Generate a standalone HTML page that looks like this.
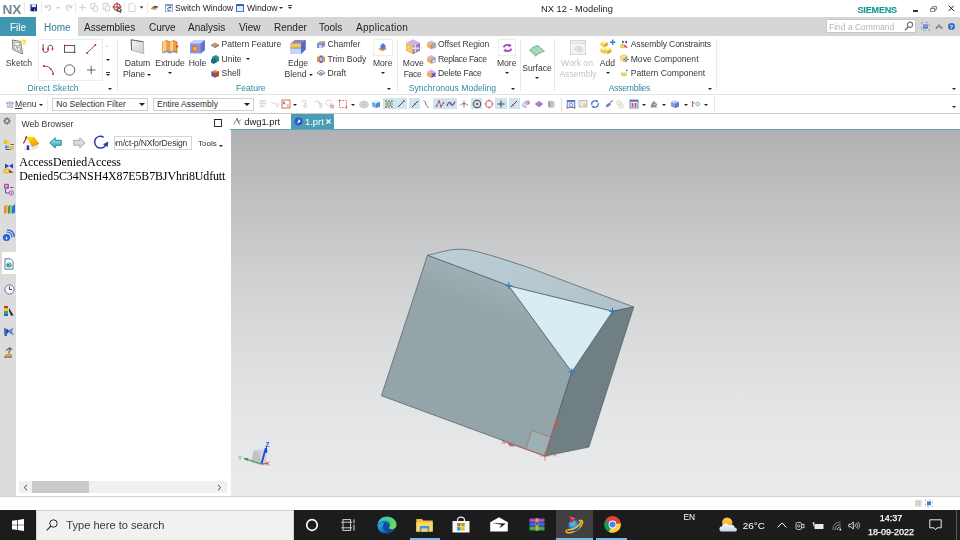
<!DOCTYPE html>
<html>
<head>
<meta charset="utf-8">
<title>NX 12 - Modeling</title>
<style>
*{box-sizing:border-box;margin:0;padding:0}
html,body{width:960px;height:540px;overflow:hidden;background:#fff}
div,svg{will-change:opacity}
body{position:relative;font-family:"Liberation Sans",sans-serif;font-size:8.4px;color:#222}
.a{position:absolute;white-space:nowrap}
.t{position:absolute;white-space:nowrap;line-height:10px;font-size:8.6px;color:#383838}
.tc{text-align:center}
.teal{color:#2f8aa5}
.dis{color:#c2c2c2}
#titlebar{left:0;top:-0.7px;width:960px;height:17.7px;background:transparent}
#tabbar{left:0;top:17px;width:960px;height:19px;background:#d6d6d6}
#ribbon{left:0;top:36px;width:960px;height:59px;background:#fff;border-bottom:1px solid #e4e4e4}
#selbar{left:0;top:95px;width:960px;height:19px;background:#fff;border-bottom:1px solid #c9c9c9}
.tab{position:absolute;top:0;height:19px;line-height:21px;font-size:10px;color:#222;white-space:nowrap}
.vsep{position:absolute;width:1px;background:#e9e9e9}
.dd{position:absolute;border-left:2px solid transparent;border-right:2px solid transparent;border-top:2.5px solid #222;width:0;height:0}
.combo{position:absolute;top:2.8px;height:13.2px;border:1px solid #cfcfcf;background:#fff;font-size:8.5px;line-height:11.4px;padding-left:3px;color:#2e2e2e}
#resbar{left:0;top:114px;width:16px;height:382px;background:#dcdcdc}
#webpanel{left:16px;top:114px;width:214px;height:382px;background:#fff}
#viewtabs{left:230px;top:114px;width:730px;height:15.6px;background:#fff;border-bottom:1.6px solid #62a6ba}
#viewport{left:230.5px;top:129.6px;width:729.5px;height:366.4px;background:linear-gradient(#b0b1b2 0%,#c4c5c6 25%,#d6d7d8 50%,#e3e4e5 75%,#eaebec 100%)}
#status{left:0;top:496px;width:960px;height:14px;background:#fff;border-top:1px solid #d0d0d0}
#selbar svg{opacity:0.82}
#taskbar{left:0;top:510px;width:960px;height:30px;background:#1c1c1c}
</style>
</head>
<body>
<div id="titlebar" class="a">
<div class="a" style="left:2.5px;top:1.2px;font-size:13.6px;line-height:17px;font-weight:bold;color:#6e8898;letter-spacing:-0.1px">NX</div>
<div class="vsep" style="left:24px;top:3px;height:11px"></div>
<svg class="a" style="left:29.7px;top:4.8px" width="7.6" height="7.6" viewBox="0 0 9 9"><rect x="0.5" y="0.5" width="8" height="8" fill="#1c2a8c"/><rect x="2" y="0.5" width="5" height="3.2" fill="#e8ecff"/><rect x="2.5" y="5.5" width="4" height="3" fill="#0d1560"/><rect x="5" y="6" width="1" height="2" fill="#dfe4ff"/></svg>
<div class="vsep" style="left:41px;top:3px;height:11px"></div>
<svg class="a" style="left:44px;top:4px" width="30" height="9" viewBox="0 0 30 9" fill="none" stroke="#cfcfcf" stroke-width="1.2"><path d="M1.5 4.5 C3 1.5 7 1.5 6.5 5 C6.3 6.5 5 7.5 4 7.5"/><path d="M1 2 L1.5 5 L4.3 4.3" stroke-width="1"/><path d="M12.2 4 L15.8 4 L14 6 Z" fill="#c4c4c4" stroke="none"/><path d="M27.5 4.5 C26 1.5 22 1.5 22.5 5 C22.7 6.5 24 7.5 25 7.5"/><path d="M28 2 L27.5 5 L24.7 4.3" stroke-width="1"/></svg>
<div class="vsep" style="left:75px;top:3px;height:11px"></div>
<svg class="a" style="left:78px;top:3px" width="46" height="11" viewBox="0 0 46 11" fill="none" stroke="#d2d2d2" stroke-width="1"><path d="M4.5 2.2 V8.8 M1.4 5.5 H7.8"/><rect x="13" y="1.5" width="4" height="5"/><rect x="15.5" y="4" width="4" height="5" fill="#fff"/><rect x="25" y="1.5" width="5" height="6"/><rect x="27.5" y="4" width="4" height="5" fill="#fff"/><circle cx="39" cy="5" r="3.2" stroke="#c62828" stroke-width="1.1"/><path d="M39 0.5 V9.5 M34.5 5 H43.5" stroke="#8e1b1b" stroke-width="0.8"/><path d="M40 5.5 L40 10 L41.3 8.8 L42.2 10.6 L43 10.2 L42.2 8.5 L43.8 8.3 Z" fill="#fff" stroke="#111" stroke-width="0.7"/></svg>
<div class="vsep" style="left:124px;top:3px;height:11px"></div>
<svg class="a" style="left:127px;top:3px" width="20" height="11" viewBox="0 0 20 11" fill="none" stroke="#d4d4d4" stroke-width="1"><path d="M2 1.5 H6 L8 3.5 V9.5 H2 Z"/><path d="M12.6 4.5 L16.4 4.5 L14.5 6.6 Z" fill="#222" stroke="none"/></svg>
<div class="vsep" style="left:147px;top:3px;height:11px"></div>
<svg class="a" style="left:150px;top:5px" width="8.6" height="7.4" viewBox="0 0 10 9"><path d="M0.5 5.5 L4 3.5 L9 5 L5.5 7.5 Z" fill="#e59b2b"/><path d="M4.5 2 L9.5 2.8 L8.5 5 L4.2 4 Z" fill="#32409a"/><path d="M0.5 5.5 L4 3.5 L4.5 5 Z" fill="#7c5a1a"/></svg>
<svg class="a" style="left:164.5px;top:4.6px" width="8" height="8.4" viewBox="0 0 8 8.4" fill="none"><rect x="0.5" y="0.5" width="7" height="7.4" fill="#f4f6fb" stroke="#8494b8" stroke-width="0.8"/><rect x="0.5" y="0.5" width="7" height="1.4" fill="#8494b8"/><path d="M5.8 3.4 C4 2.8 2.6 3.8 2.8 5.4 C3 6.6 4.4 7 5.4 6.4" stroke="#2a4ac8" stroke-width="1"/><path d="M4.6 2.2 L6.6 3.4 L4.8 4.8 Z" fill="#2a4ac8"/></svg>
<div class="t" style="left:175px;top:3.5px;font-size:8.6px;color:#222">Switch Window</div>
<svg class="a" style="left:236px;top:4.7px" width="8" height="8.2" viewBox="0 0 8 8.2" fill="none"><rect x="0.5" y="0.5" width="7" height="7.2" fill="#e4ecfc" stroke="#3658c8" stroke-width="0.9"/><rect x="0.5" y="0.5" width="7" height="1.5" fill="#3658c8"/></svg>
<div class="t" style="left:247px;top:3.5px;font-size:8.6px;color:#222">Window</div>
<div class="dd" style="left:279px;top:8px"></div>
<div class="a" style="left:287.8px;top:5.8px;width:4.4px;height:1px;background:#333"></div>
<div class="dd" style="left:288px;top:8px"></div>
<div class="t" style="left:541px;top:4.6px;font-size:9.3px;color:#222">NX 12 - Modeling</div>
<div class="a" style="left:857.5px;top:1.2px;font-size:9px;line-height:18px;font-weight:bold;color:#0f9a96;-webkit-text-stroke:0.12px #0f9a96;letter-spacing:-0.15px">SIEMENS</div>
<div class="a" style="left:913px;top:11px;width:5px;height:1.2px;background:#333"></div>
<svg class="a" style="left:929.5px;top:6.3px" width="7.2" height="6.4" viewBox="0 0 9 8" fill="none" stroke="#555" stroke-width="1"><path d="M0.8 3 H6 V7.2 H0.8 Z"/><path d="M2.5 3 L3 0.8 H8.2 L7.6 5 H6"/></svg>
<svg class="a" style="left:947.5px;top:5.7px" width="6.6" height="6.6" viewBox="0 0 8 8" fill="none" stroke="#222" stroke-width="1.2"><path d="M0.8 0.8 L7.2 7.2 M7.2 0.8 L0.8 7.2"/></svg>
</div>
<div id="tabbar" class="a">
<div class="a" style="left:0;top:0;width:35.5px;height:19px;background:#4297b0"></div>
<div class="tab" style="left:10px;color:#fff">File</div>
<div class="a" style="left:36px;top:0;width:42px;height:19px;background:#fff"></div>
<div class="tab" style="left:44px;color:#2d7d96">Home</div>
<div class="tab" style="left:84px">Assemblies</div>
<div class="tab" style="left:149px">Curve</div>
<div class="tab" style="left:188px">Analysis</div>
<div class="tab" style="left:239px">View</div>
<div class="tab" style="left:274px">Render</div>
<div class="tab" style="left:319px">Tools</div>
<div class="tab" style="left:356px;letter-spacing:0.3px">Application</div>
<div class="a" style="left:826px;top:2px;width:90px;height:14px;background:#fff;border:1px solid #c8c8c8"></div>
<div class="t" style="left:829px;top:4.5px;font-size:8.5px;color:#b5b5b5">Find a Command</div>
<svg class="a" style="left:904px;top:4px" width="10" height="10" viewBox="0 0 10 10" fill="none" stroke="#777" stroke-width="1.2"><circle cx="6" cy="3.8" r="2.6"/><path d="M4 6 L1 9.2" stroke-width="1.6"/></svg>
<svg class="a" style="left:921px;top:5px" width="9" height="9" viewBox="0 0 9 9" fill="none"><rect x="0.6" y="0.6" width="7.8" height="7.8" stroke="#8a8f99" stroke-width="0.8" stroke-dasharray="2.5 2.6" stroke-dashoffset="1.2"/><rect x="2.2" y="2.5" width="4.6" height="4" fill="#3b62c4"/><rect x="2.8" y="3.6" width="3.4" height="1" fill="#cfe0ff"/></svg>
<svg class="a" style="left:934.5px;top:6.3px" width="8" height="6.2" viewBox="0 0 9 7" fill="none" stroke="#4a4a4a" stroke-width="0.8"><path d="M0.8 5.8 L4.5 1.8 L8.2 5.8 L6.6 5.8 L4.5 3.6 L2.4 5.8 Z"/></svg>
<svg class="a" style="left:948.3px;top:6.3px" width="7" height="7" viewBox="0 0 8 8"><circle cx="4" cy="4" r="3.7" fill="#2f6fd6"/><circle cx="4" cy="4" r="3.7" fill="none" stroke="#1b4aa3" stroke-width="0.5"/><text x="4" y="6.4" font-size="6.2" font-weight="bold" fill="#fff" text-anchor="middle" font-family="Liberation Sans, sans-serif">?</text></svg>
</div>
<div id="ribbon" class="a">
<svg class="a" style="left:11px;top:2px" width="17" height="17" viewBox="0 0 17 17"><path d="M1.5 2 L9.5 3.5 L11.5 16 L1.8 11.5 Z" fill="#eceeec" stroke="#7a7e7a" stroke-width="1"/><path d="M3 4 L8.3 5 L8.8 8 L3.2 6.8 Z" fill="#fff" stroke="#8a8e8a" stroke-width="0.7"/><ellipse cx="4.3" cy="9.2" rx="1.3" ry="1.5" fill="#fff" stroke="#8a8e8a" stroke-width="0.7"/><path d="M6.5 9.3 L9.3 10.2 L9.8 13.3 L6.7 12 Z" fill="#fff" stroke="#8a8e8a" stroke-width="0.7"/><path d="M12 0.2 L12.9 2.6 L15.8 1.5 L14 3.9 L16.6 5.2 L13.6 5.3 L13.2 8 L11.8 5.6 L9.2 6.6 L10.6 4.2 L8.6 2.6 L11.3 2.8 Z" fill="#f1e11a"/><circle cx="12.2" cy="4.1" r="1.2" fill="#fffbd0"/></svg>
<div class="t tc " style="left:-21px;width:80px;top:21.5px;">Sketch</div>
<div class="a" style="left:37.5px;top:3px;width:65px;height:42px;border:1px solid #ececec"></div>
<svg class="a" style="left:41px;top:5px" width="58" height="38" viewBox="0 0 58 38" fill="none">
<path d="M2.1 3.1 V9.4 C2.1 12 7.1 12 7.1 9.4 V6.2 C7.1 3.6 11.5 3.6 11.5 6.2 V9.2" stroke="#3a3030" stroke-width="0.9"/><circle cx="2.1" cy="8.2" r="0.95" fill="#d02222"/><circle cx="7.1" cy="8.2" r="0.95" fill="#d02222"/><circle cx="11.5" cy="8.2" r="0.95" fill="#d02222"/>
<rect x="23.5" y="4.5" width="10.2" height="6.8" stroke="#4a4444" stroke-width="0.9"/><circle cx="23.7" cy="4.5" r="0.9" fill="#d02222"/><circle cx="33.5" cy="11.3" r="0.9" fill="#d02222"/>
<path d="M46.1 11.9 L54.3 4" stroke="#5a3434" stroke-width="0.8"/><circle cx="46.1" cy="11.9" r="1" fill="#d02222"/><circle cx="54.3" cy="4" r="1" fill="#d02222"/>
<path d="M2.8 25 C7.5 25 11.5 28 12.1 33.1" stroke="#6a2a2a" stroke-width="0.9"/><circle cx="2.8" cy="25" r="1" fill="#d02222"/><circle cx="12.1" cy="33.1" r="1" fill="#d02222"/><circle cx="9.6" cy="27.8" r="0.85" fill="#d02222"/>
<circle cx="28.6" cy="29" r="5.2" stroke="#444" stroke-width="0.85"/>
<path d="M50.2 24.8 V33.2 M46 29 H54.4" stroke="#444" stroke-width="0.85"/>
</svg>
<div class="dd" style="left:106.3px;top:8.5px;border-top:none;border-bottom:2.2px solid #c4c4c4;border-left-width:1.8px;border-right-width:1.8px"></div>
<div class="dd" style="left:106px;top:23.0px;border-top-color:#222"></div>
<div class="a" style="left:106px;top:36px;width:4px;height:1px;background:#333"></div>
<div class="dd" style="left:106px;top:38.0px;border-top-color:#222"></div>
<div class="t teal" style="left:27.5px;top:47.0px;">Direct Sketch</div>
<div class="dd" style="left:108px;top:51.5px;border-top-color:#222"></div>
<div class="vsep" style="left:117px;top:3px;height:52px"></div>
<svg class="a" style="left:130px;top:3px" width="16" height="16" viewBox="0 0 16 16"><defs><linearGradient id="dp" x1="0" y1="0" x2="1" y2="1"><stop offset="0" stop-color="#f3f5f2"/><stop offset="1" stop-color="#c9d2c9"/></linearGradient></defs><path d="M1.2 0.8 L13.4 2.8 L13.8 14.6 L1.6 11.2 Z" fill="url(#dp)" stroke="#9aa09a" stroke-width="0.7"/><path d="M1.6 11.2 L1.2 0.8 L13.4 2.8" fill="none" stroke="#5a5f5a" stroke-width="0.9"/></svg>
<div class="t tc " style="left:97.5px;width:80px;top:21.5px;">Datum</div>
<div class="t " style="left:123px;top:33.0px;">Plane</div>
<div class="dd" style="left:147px;top:37.5px;border-top-color:#222"></div>
<svg class="a" style="left:161px;top:3px" width="18" height="16" viewBox="0 0 18 16"><path d="M1.5 3 L5.5 1.5 L9 3 L12.5 1.5 L16 3 V14 L12.5 12.5 L9 14 L5.5 12.5 L1.5 14 Z" fill="#f4a13c" stroke="#b6651a" stroke-width="0.7"/><path d="M5.5 1.5 V12.5 M9 3 V14 M12.5 1.5 V12.5" stroke="#c8741e" stroke-width="0.7"/><path d="M1.5 3 L5.5 1.5 V12.5 L1.5 14 Z" fill="#fbd08e"/><path d="M9 3 L12.5 1.5 V12.5 L9 14 Z" fill="#fbd08e"/><path d="M2.5 12.4 L5.5 11.2 L9 12.6 L12.5 11.2 L15 12.2 V14 L12.5 13 L9 14.6 L5.5 13 L2.5 14.2 Z" fill="#7f8fd6" opacity="0.85"/><path d="M15.5 6 L17.5 7.5 L15.5 9 Z" fill="#d02222"/></svg>
<div class="t tc " style="left:130px;width:80px;top:21.5px;">Extrude</div>
<div class="dd" style="left:168px;top:35.5px;border-top-color:#222"></div>
<svg class="a" style="left:189px;top:3px" width="17" height="16" viewBox="0 0 17 16"><path d="M1 4.6 L5 1 H16 V11 L11.6 14.6 H1 Z" fill="#8698e6"/><path d="M1 4.6 L5 1 H16 L11.6 4.6 Z" fill="#c6d0f8"/><path d="M11.6 4.6 L16 1 V11 L11.6 14.6 Z" fill="#5f76cc"/><circle cx="6" cy="9.6" r="2.7" fill="#f8ae2c" stroke="#e0503a" stroke-width="0.8"/></svg>
<div class="t tc " style="left:157.5px;width:80px;top:21.5px;">Hole</div>
<svg class="a" style="left:210px;top:4px" width="10" height="38" viewBox="0 0 10 38"><path d="M1 4.5 L5 2.5 L9 4.5 L5 6.8 Z" fill="#e8913a"/><path d="M1 4.5 L5 6.8 V8 L1 5.6 Z" fill="#5a6fc0"/><path d="M9 4.5 L5 6.8 V8 L9 5.6 Z" fill="#3b4f9e"/>
<path d="M2 17 L6 15 L9 17 V21 L5 23 L2 21 Z" fill="#2f8f7a"/><path d="M1 19.5 L4 18 L6.5 19.5 V22.5 L3.5 24 L1 22.5 Z" fill="#1c6b8a"/>
<path d="M1.5 31.5 L5 30 L9 31.5 V36 L5 37.5 L1.5 36 Z" fill="#e58a2e"/><path d="M1.5 31.5 L5 33 V37.5 L1.5 36 Z" fill="#4a62c2"/><path d="M5 33 L9 31.5 V36 L5 37.5 Z" fill="#c2452e"/></svg>
<div class="t " style="left:221.5px;top:3.0px;">Pattern Feature</div>
<div class="t " style="left:221.5px;top:17.5px;">Unite</div>
<div class="dd" style="left:245.5px;top:22.0px;border-top-color:#222"></div>
<div class="t " style="left:221.5px;top:32.0px;">Shell</div>
<svg class="a" style="left:289px;top:3px" width="18" height="17" viewBox="0 0 18 17"><defs><linearGradient id="ebg" x1="0" y1="0" x2="0" y2="1"><stop offset="0" stop-color="#b9d88e"/><stop offset="0.6" stop-color="#f2c45a"/><stop offset="1" stop-color="#f08a3a"/></linearGradient></defs><path d="M1.6 4.6 L6 1 H16.6 V10.6 L12 15 H1.6 Z" fill="#7288e2"/><path d="M1.6 4.6 L6 1 H16.6 L12 4.6 Z" fill="#e8824a"/><path d="M3.8 3.6 L6.6 1.6 H15 L12 3.8 Z" fill="#6a86e8"/><path d="M12 4.6 L16.6 1 V10.6 L12 15 Z" fill="#5068d0"/><path d="M1.6 5.4 C1.6 4.8 2.2 4.4 2.8 4.4 H12 V9.4 H1.6 Z" fill="url(#ebg)"/><path d="M1.6 9.4 H12 V15 H1.6 Z" fill="#c6d4f6"/><path d="M1.6 9.4 H12" stroke="#8aa0dc" stroke-width="0.5"/></svg>
<div class="t tc " style="left:258px;width:80px;top:21.5px;">Edge</div>
<div class="t " style="left:284.5px;top:33.0px;">Blend</div>
<div class="dd" style="left:308.5px;top:37.5px;border-top-color:#222"></div>
<svg class="a" style="left:316px;top:4px" width="10" height="38" viewBox="0 0 10 38"><path d="M1 3.5 L4 1.5 H9 V6 L6 8 H1 Z" fill="#7c8fdb"/><path d="M1 3.5 L6 3.5 L9 1.5 L4 1.5Z" fill="#e5a04a"/><path d="M3 5 H6 V8 H3 Z" fill="#c7d2f5"/>
<rect x="1" y="16.5" width="8" height="5.5" fill="#e8943a"/><rect x="3.5" y="15.5" width="3" height="7.5" fill="#5369c7"/><rect x="4.3" y="17.5" width="1.4" height="3.5" fill="#dfe5fb"/>
<path d="M1 33 L5 30 L9 33 L5 35.5 Z" fill="none" stroke="#b55a8a" stroke-width="0.9"/><path d="M2.5 33.5 L5 31.8 L7.5 33.5 L5 35 Z" fill="#8a9bd8"/></svg>
<div class="t " style="left:327.5px;top:3.0px;">Chamfer</div>
<div class="t " style="left:327.5px;top:17.5px;">Trim Body</div>
<div class="t " style="left:327.5px;top:32.0px;">Draft</div>
<div class="a" style="left:373px;top:3px;width:19.5px;height:16.5px;border:1px solid #ededed"></div>
<svg class="a" style="left:377px;top:6px" width="11" height="10" viewBox="0 0 11 10"><path d="M1 7 L5.5 5 L10 7 L5.5 9.2 Z" fill="#e39a3a"/><path d="M3.5 3.5 L6 1 L8.5 3.5 V6.5 L6 7.6 L3.5 6.5 Z" fill="#5a74d4"/></svg>
<div class="t tc " style="left:342.7px;width:80px;top:21.5px;">More</div>
<div class="dd" style="left:380.5px;top:35.5px;border-top-color:#222"></div>
<div class="t teal" style="left:236px;top:47.0px;">Feature</div>
<div class="dd" style="left:387px;top:51.5px;border-top-color:#222"></div>
<div class="vsep" style="left:396.5px;top:3px;height:52px"></div>
<svg class="a" style="left:406px;top:3px" width="15" height="16" viewBox="0 0 15 16"><path d="M7 0.3 L14 3.8 L7 7.3 L0.2 3.8 Z" fill="#cfb0ea"/><path d="M0.2 3.8 L7 7.3 V15.3 L0.2 11.8 Z" fill="#f0ae3c"/><path d="M7 7.3 L14 3.8 V11.8 L7 15.3 Z" fill="#a274d2"/><path d="M1.2 5.2 L6 7.7 V13.6 L1.2 11.2 Z" fill="#f8cf6a"/><path d="M9.2 4.6 L11 6.6 H10 V8.2 H11.6 V7.2 L13.8 9.2 L11.6 11.2 V10.2 H10 V11.8 H11 L9.2 13.8 L7.4 11.8 H8.4 V10.2 H6.8 V11.2 L4.6 9.2 L6.8 7.2 V8.2 H8.4 V6.6 H7.4 Z" fill="#e6e6e8" stroke="#8c8c94" stroke-width="0.5"/></svg>
<div class="t tc " style="left:373.3px;width:80px;top:21.5px;">Move</div>
<div class="t tc " style="left:372.6px;width:80px;top:33.0px;letter-spacing:-0.3px">Face</div>
<svg class="a" style="left:427px;top:4px" width="10" height="38" viewBox="0 0 10 38"><g><path d="M4.2 0.6 L8.4 2.7 L4.2 4.8 L0.2 2.7 Z" fill="#cfb0ea"/><path d="M0.2 2.7 L4.2 4.8 V9.2 L0.2 7.1 Z" fill="#f0ae3c"/><path d="M4.2 4.8 L8.4 2.7 V7.1 L4.2 9.2 Z" fill="#a274d2"/></g><circle cx="6.8" cy="6" r="2" fill="#eee" stroke="#666" stroke-width="0.6"/><path d="M6.8 4.8 V7.2 M5.6 6 H8" stroke="#555" stroke-width="0.5"/>
<g transform="translate(0,14.5)"><path d="M4.2 0.6 L8.4 2.7 L4.2 4.8 L0.2 2.7 Z" fill="#cfb0ea"/><path d="M0.2 2.7 L4.2 4.8 V9.2 L0.2 7.1 Z" fill="#f0ae3c"/><path d="M4.2 4.8 L8.4 2.7 V7.1 L4.2 9.2 Z" fill="#a274d2"/></g><path d="M4.8 20.2 L8.6 18.6 L8.6 22 L5.4 23.2 Z" fill="#d8d8de" stroke="#888" stroke-width="0.4"/>
<g transform="translate(0,29)"><path d="M4.2 0.6 L8.4 2.7 L4.2 4.8 L0.2 2.7 Z" fill="#cfb0ea"/><path d="M0.2 2.7 L4.2 4.8 V9.2 L0.2 7.1 Z" fill="#f0ae3c"/><path d="M4.2 4.8 L8.4 2.7 V7.1 L4.2 9.2 Z" fill="#a274d2"/></g><path d="M5 33.4 L8.6 37 M8.6 33.4 L5 37" stroke="#5a3a8a" stroke-width="1"/></svg>
<div class="t " style="left:438px;top:3.0px;letter-spacing:-0.1px">Offset Region</div>
<div class="t " style="left:438px;top:17.5px;letter-spacing:-0.37px">Replace Face</div>
<div class="t " style="left:438px;top:32.0px;letter-spacing:-0.25px">Delete Face</div>
<div class="a" style="left:497.5px;top:3px;width:18.5px;height:16.5px;border:1px solid #ededed"></div>
<svg class="a" style="left:501.5px;top:6.5px" width="11" height="10" viewBox="0 0 11 10" fill="none" stroke="#a84cc8" stroke-width="1.9"><path d="M1.6 4.4 C2.4 1.8 6 1.2 7.8 2.8"/><path d="M9.4 5.6 C8.6 8.2 5 8.8 3.2 7.2"/><path d="M6.6 0.6 L9.8 2.4 L6.8 4.6 Z M4.4 9.4 L1.2 7.6 L4.2 5.4 Z" fill="#a84cc8" stroke="none"/></svg>
<div class="t tc " style="left:466.7px;width:80px;top:21.5px;">More</div>
<div class="dd" style="left:504.5px;top:35.5px;border-top-color:#222"></div>
<div class="t teal" style="left:408.7px;top:47.0px;">Synchronous Modeling</div>
<div class="dd" style="left:511px;top:51.5px;border-top-color:#222"></div>
<div class="vsep" style="left:520px;top:3px;height:52px"></div>
<svg class="a" style="left:529px;top:9.3px" width="16" height="11.6" viewBox="0 0 18 13"><path d="M0.5 6 C4 2 7 1 10 0.5 C13 3 15.5 5 17.5 7 C14 8 10 10 7.5 12.5 C5 10 2.5 8 0.5 6 Z" fill="#8fcfa4" stroke="#4f9a6c" stroke-width="0.6"/><path d="M3.8 3.2 L10.5 9.5 M7 1.5 L14 7.8 M2.8 8 C6 5 9 3.5 13.2 3 M5 10.2 C8 7.5 11 6 15.5 5.2" stroke="#e8f6ec" stroke-width="0.6" fill="none"/></svg>
<div class="t tc " style="left:497px;width:80px;top:26.5px;">Surface</div>
<div class="dd" style="left:535px;top:40.5px;border-top-color:#222"></div>
<div class="vsep" style="left:553.7px;top:3px;height:52px"></div>
<svg class="a" style="left:570px;top:4px" width="16" height="15" viewBox="0 0 16 15" fill="none" stroke="#d3d3d3" stroke-width="0.9"><rect x="0.5" y="0.5" width="15" height="14" fill="#f4f4f4"/><path d="M0.5 3 H15.5"/><path d="M4 9 L7 6 L10 7 L8 11 Z M9 8.5 L12 7.5 L12.5 11 L9.5 12 Z" fill="#e6e6e6"/></svg>
<div class="t tc dis" style="left:537px;width:80px;top:21.5px;">Work on</div>
<div class="t tc dis" style="left:538px;width:80px;top:33.0px;">Assembly</div>
<svg class="a" style="left:599.5px;top:2.5px" width="17" height="16" viewBox="0 0 17 16"><g><path d="M0.6 3.4 L4.2 1.7 L7.8 3.4 V6.6 L4.2 8.3 L0.6 6.6 Z" fill="#f0cf48"/><path d="M0.6 3.4 L4.2 1.7 L7.8 3.4 L4.2 5.1 Z" fill="#fdf3b4"/><path d="M4.2 5.1 L7.8 3.4 V6.6 L4.2 8.3 Z" fill="#dcae2c"/></g><g transform="translate(-0.2,6.4)"><path d="M0.6 3.4 L4.2 1.7 L7.8 3.4 V6.6 L4.2 8.3 L0.6 6.6 Z" fill="#f0cf48"/><path d="M0.6 3.4 L4.2 1.7 L7.8 3.4 L4.2 5.1 Z" fill="#fdf3b4"/><path d="M4.2 5.1 L7.8 3.4 V6.6 L4.2 8.3 Z" fill="#dcae2c"/></g><g transform="translate(3.4,6.7)"><path d="M0.6 3.4 L4.2 1.7 L7.8 3.4 V6.6 L4.2 8.3 L0.6 6.6 Z" fill="#f0cf48"/><path d="M0.6 3.4 L4.2 1.7 L7.8 3.4 L4.2 5.1 Z" fill="#fdf3b4"/><path d="M4.2 5.1 L7.8 3.4 V6.6 L4.2 8.3 Z" fill="#dcae2c"/></g><path d="M12.7 0.6 V6 M10 3.3 H15.4" stroke="#2f7fe0" stroke-width="1.4"/></svg>
<div class="t tc " style="left:567.5px;width:80px;top:21.5px;">Add</div>
<div class="dd" style="left:605.5px;top:35.5px;border-top-color:#222"></div>
<svg class="a" style="left:620px;top:4px" width="10" height="38" viewBox="0 0 10 38"><path d="M2.2 0.6 L4.6 1.9 L7 0.6 V3.4 L4.6 2.1 L2.2 3.4 Z" fill="#2a3cc8"/><circle cx="2.2" cy="6" r="1.9" fill="#ecd94a" stroke="#b8a420" stroke-width="0.4"/><path d="M4.4 4.4 L8 7.6 H4.4 Z" fill="#d42a2a"/>
<path d="M0.6 16.4 L4 14.6 L7.4 16.4 V20.2 L4 22 L0.6 20.2 Z" fill="#f6e7a6" stroke="#d6b040" stroke-width="0.6"/><path d="M0.6 16.4 L4 18.2 L7.4 16.4 M4 18.2 V22" stroke="#d6b040" stroke-width="0.5" fill="none"/><path d="M6 16.8 V22.4 M3.2 19.6 H8.8" stroke="#666" stroke-width="0.9"/><circle cx="6" cy="19.6" r="1.1" fill="#ddd" stroke="#555" stroke-width="0.4"/>
<path d="M0.8 33 L3.4 31.8 L7 33 V35 L4.4 36.4 L0.8 35 Z" fill="#ecc64a"/><path d="M0.8 33 L3.4 31.8 L7 33 L4.4 34.2 Z" fill="#f8e598"/><circle cx="6.8" cy="30.4" r="0.8" fill="#3a5ad8"/></svg>
<div class="t " style="left:630.7px;top:3.0px;letter-spacing:-0.14px">Assembly Constraints</div>
<div class="t " style="left:630.7px;top:17.5px;">Move Component</div>
<div class="t " style="left:630.7px;top:32.0px;">Pattern Component</div>
<div class="t teal" style="left:608.7px;top:47.0px;letter-spacing:-0.25px">Assemblies</div>
<div class="dd" style="left:707.5px;top:51.5px;border-top-color:#222"></div>
<div class="vsep" style="left:716px;top:3px;height:52px"></div>
<div class="dd" style="left:952px;top:51.5px;border-top-color:#222"></div>
</div>
<div id="selbar" class="a">
<svg class="a" style="left:4.5px;top:4.0px" width="10" height="10" viewBox="0 0 10 10" fill="none"><path d="M1 4.2 C1 1.8 9 1.8 9 4.2 V5 H6.8 V3.8 H3.2 V5 H1 Z" fill="#9aa8c0"/><rect x="2.2" y="4.6" width="5.6" height="4.2" fill="#d3dae8" stroke="#8894ac" stroke-width="0.6"/><path d="M3.4 6 H6.6 M3.4 7.4 H6.6" stroke="#8894ac" stroke-width="0.5"/></svg>
<div class="t" style="left:15px;top:4px"><span style="text-decoration:underline">M</span>enu</div>
<div class="dd" style="left:38.5px;top:8.5px;border-top-color:#222"></div>
<div class="vsep" style="left:47px;top:3px;height:13px;background:#ececec"></div>
<div class="combo" style="left:52.3px;width:96px">No Selection Filter</div>
<div class="dd" style="left:138.5px;top:7.7px;border-left-width:3px;border-right-width:3px;border-top:3.4px solid #222"></div>
<div class="combo" style="left:153px;width:100.5px">Entire Assembly</div>
<div class="dd" style="left:243.7px;top:7.7px;border-left-width:3px;border-right-width:3px;border-top:3.4px solid #222"></div>
<svg class="a" style="left:257.0px;top:4.0px" width="10" height="10" viewBox="0 0 10 10" fill="none"><path d="M2 2 H8 M2 4.5 H8 M2 7 H8 M5 1 V9" stroke="#cdcdcd" stroke-width="1"/><circle cx="7.5" cy="3" r="1.8" stroke="#cdcdcd" stroke-width="0.8"/></svg>
<svg class="a" style="left:270.0px;top:4.0px" width="10" height="10" viewBox="0 0 10 10" fill="none"><path d="M1 3 L3 5 L5 2.5 M5 5 H9 L7.5 8.5 Z" stroke="#cdcdcd" stroke-width="0.9"/></svg>
<svg class="a" style="left:281.0px;top:4.0px" width="10" height="10" viewBox="0 0 10 10" fill="none"><rect x="1" y="1" width="8" height="8" stroke="#c0392b" stroke-width="0.9" fill="#fff"/><path d="M3 2.5 V5.5 M1.8 4 H4.2" stroke="#333" stroke-width="0.8"/><path d="M5 5.5 H8.5 L6.8 8.5 Z" fill="#f0b429"/></svg>
<div class="dd" style="left:292.7px;top:8.5px;border-top-color:#222"></div>
<svg class="a" style="left:300.3px;top:4.0px" width="10" height="10" viewBox="0 0 10 10" fill="none"><path d="M2 3 C3 0.5 7 1 6 4 L5 6 M5 4 V9.5 M2.5 7 H7.5" stroke="#cdcdcd" stroke-width="1.1"/></svg>
<svg class="a" style="left:312.5px;top:4.0px" width="10" height="10" viewBox="0 0 10 10" fill="none"><path d="M1.5 2.5 L5.5 2 L7 5 V9 M5 4.5 L8.5 4.5 L8.5 9" stroke="#cdcdcd" stroke-width="1.1"/></svg>
<svg class="a" style="left:325.0px;top:4.0px" width="10" height="10" viewBox="0 0 10 10" fill="none"><circle cx="4" cy="4" r="3" stroke="#cdcdcd" stroke-width="0.9"/><path d="M4 4 L6 6.5" stroke="#cdcdcd" stroke-width="0.9"/><circle cx="7.2" cy="7.4" r="1.9" fill="#e06b6b"/><circle cx="7.2" cy="7.4" r="0.8" fill="#fff"/></svg>
<svg class="a" style="left:337.5px;top:4.0px" width="10" height="10" viewBox="0 0 10 10" fill="none"><rect x="1.5" y="1.5" width="7" height="7" stroke="#c0392b" stroke-width="0.9" stroke-dasharray="1.6 1.2"/><circle cx="1.5" cy="1.5" r="0.9" fill="#c0392b"/><circle cx="8.5" cy="8.5" r="0.9" fill="#c0392b"/></svg>
<div class="dd" style="left:351px;top:8.5px;border-top-color:#222"></div>
<svg class="a" style="left:359.0px;top:4.0px" width="10" height="10" viewBox="0 0 10 10" fill="none"><ellipse cx="5" cy="5.5" rx="4.2" ry="3" fill="#d8dbe2" stroke="#8a8f9c" stroke-width="0.7"/><path d="M3 6 L5 3.5 L7 6 Z" fill="#f4f4f6" stroke="#b04a4a" stroke-width="0.5"/></svg>
<svg class="a" style="left:371.0px;top:4.0px" width="10" height="10" viewBox="0 0 10 10" fill="none"><path d="M1 3 L5 1.5 L9 3 V7.5 L5 9 L1 7.5 Z" fill="#5b9be6"/><path d="M1 3 L5 1.5 L9 3 L5 4.5 Z" fill="#dfeeff"/><path d="M5 4.5 L9 3 V7.5 L5 9 Z" fill="#2f6fc4"/></svg>
<div class="a" style="left:383px;top:3.3px;width:23.69999999999999px;height:11.2px;background:#cfe6ee"></div>
<div class="a" style="left:408.7px;top:3.3px;width:11.300000000000011px;height:11.2px;background:#cfe6ee"></div>
<svg class="a" style="left:384.0px;top:4.0px" width="10" height="10" viewBox="0 0 10 10" fill="none"><path d="M2 2 L8 8 M8 2 L2 8 M5 1 V9 M1 5 H9" stroke="#2a2a2a" stroke-width="0.7"/><circle cx="5" cy="5" r="1.3" fill="#f0c020"/><circle cx="2" cy="2" r="0.9" fill="#2e9e4a"/><circle cx="8" cy="2" r="0.9" fill="#2e9e4a"/><circle cx="2" cy="8" r="0.9" fill="#d03030"/><circle cx="8" cy="8" r="0.9" fill="#2e9e4a"/></svg>
<svg class="a" style="left:396.0px;top:4.0px" width="10" height="10" viewBox="0 0 10 10" fill="none"><path d="M2 8 L8 2" stroke="#222" stroke-width="1"/><circle cx="8" cy="2" r="1" fill="#d02828"/></svg>
<svg class="a" style="left:409.5px;top:4.0px" width="10" height="10" viewBox="0 0 10 10" fill="none"><path d="M2 8 L8 2" stroke="#222" stroke-width="1"/><circle cx="5" cy="5" r="1" fill="#d02828"/></svg>
<svg class="a" style="left:421.0px;top:4.0px" width="10" height="10" viewBox="0 0 10 10" fill="none"><path d="M2.5 1.5 C5.5 2 4 8 8 8.5" stroke="#444" stroke-width="0.9"/></svg>
<div class="a" style="left:433.3px;top:3.3px;width:23.399999999999977px;height:11.2px;background:#cfe6ee"></div>
<svg class="a" style="left:434.7px;top:4.0px" width="10" height="10" viewBox="0 0 10 10" fill="none"><path d="M1.5 7 L4 2 L6 7.5 L8.5 4" stroke="#7a3fa0" stroke-width="1"/><circle cx="1.5" cy="7" r="0.9" fill="#d02828"/><circle cx="4" cy="2" r="0.9" fill="#d02828"/><circle cx="6" cy="7.5" r="0.9" fill="#d02828"/><circle cx="8.5" cy="4" r="0.9" fill="#d02828"/></svg>
<svg class="a" style="left:446.3px;top:4.0px" width="10" height="10" viewBox="0 0 10 10" fill="none"><path d="M1 7 C2.5 2 4.5 3 5 5 C5.5 7 7.5 6.5 9 2.5" stroke="#3a2a6a" stroke-width="1.1"/><circle cx="5" cy="5" r="0.9" fill="#d02828"/></svg>
<svg class="a" style="left:459.0px;top:4.0px" width="10" height="10" viewBox="0 0 10 10" fill="none"><path d="M5 1.5 V8.5 M1 6.5 C3 4 7 4 9 6.5" stroke="#555" stroke-width="0.9"/><circle cx="5" cy="4.7" r="0.8" fill="#d02828"/></svg>
<div class="a" style="left:470.8px;top:3.3px;width:11.199999999999989px;height:11.2px;background:#cfe6ee"></div>
<svg class="a" style="left:471.7px;top:4.0px" width="10" height="10" viewBox="0 0 10 10" fill="none"><circle cx="5" cy="5" r="3.8" stroke="#222" stroke-width="1"/><circle cx="5" cy="5" r="1.3" fill="#d02828"/></svg>
<svg class="a" style="left:484.0px;top:4.0px" width="10" height="10" viewBox="0 0 10 10" fill="none"><circle cx="5" cy="5" r="3.5" stroke="#d03a3a" stroke-width="1"/><path d="M5 0.5 V2.5 M5 7.5 V9.5 M0.5 5 H2.5 M7.5 5 H9.5" stroke="#d03a3a" stroke-width="0.9"/></svg>
<div class="a" style="left:495.3px;top:3.3px;width:11.399999999999977px;height:11.2px;background:#cfe6ee"></div>
<div class="a" style="left:508.7px;top:3.3px;width:11.000000000000057px;height:11.2px;background:#cfe6ee"></div>
<svg class="a" style="left:496.2px;top:4.0px" width="10" height="10" viewBox="0 0 10 10" fill="none"><path d="M5 1.5 V8.5 M1.5 5 H8.5" stroke="#222" stroke-width="1"/><circle cx="5" cy="5" r="0.8" fill="#d02828"/></svg>
<svg class="a" style="left:509.0px;top:4.0px" width="10" height="10" viewBox="0 0 10 10" fill="none"><path d="M2 8 L8 2" stroke="#222" stroke-width="1"/><circle cx="3.8" cy="6.2" r="1" fill="#d02828"/></svg>
<svg class="a" style="left:520.8px;top:4.0px" width="10" height="10" viewBox="0 0 10 10" fill="none"><path d="M1.5 7.5 C1.5 3 4 1.5 8.5 2 L8.5 5 C6 5 5 6 5 8.5 Z" fill="#cfd9ee" stroke="#7d8fbc" stroke-width="0.7"/><circle cx="6.5" cy="3.8" r="1.2" fill="none" stroke="#d02828" stroke-width="0.7"/></svg>
<svg class="a" style="left:533.8px;top:4.0px" width="10" height="10" viewBox="0 0 10 10" fill="none"><path d="M0.8 5 L5 2 L9.2 5 L5 8.2 Z" fill="#6a5bd0"/><path d="M2.5 5 L5 3.2 L7.5 5 L5 6.8 Z" fill="#d45b8a"/></svg>
<svg class="a" style="left:545.8px;top:4.0px" width="10" height="10" viewBox="0 0 10 10" fill="none"><path d="M2 2 L6 1.5 L8.5 3 V8.5 L4.5 9 L2 7.5 Z" fill="#b9b9b9"/><path d="M2 2 L4.5 3.5 V9 L2 7.5 Z" fill="#8f8f8f"/></svg>
<div class="vsep" style="left:560.5px;top:3px;height:13px;background:#dcdcdc"></div>
<svg class="a" style="left:565.8px;top:4.0px" width="10" height="10" viewBox="0 0 10 10" fill="none"><rect x="1.2" y="1.5" width="7.6" height="7" fill="#e7ecfa" stroke="#3a55b0" stroke-width="0.9"/><rect x="1.2" y="1.5" width="7.6" height="1.6" fill="#3a55b0"/><circle cx="5" cy="6" r="1.8" stroke="#3a55b0" stroke-width="0.7"/><circle cx="1.5" cy="8.8" r="0.9" fill="#d02828"/><circle cx="8.6" cy="8.8" r="0.9" fill="#d02828"/></svg>
<svg class="a" style="left:578.0px;top:4.0px" width="10" height="10" viewBox="0 0 10 10" fill="none"><rect x="1" y="1.5" width="8" height="6.5" fill="#e3e5ee" stroke="#9a9fb5" stroke-width="0.8"/><rect x="5.2" y="4.5" width="3.6" height="3.6" fill="#f2c04a"/></svg>
<svg class="a" style="left:590.3px;top:4.0px" width="10" height="10" viewBox="0 0 10 10" fill="none"><path d="M1.8 6 C1 2.5 5 0.5 7.5 2.5 M8.2 4 C9 7.5 5 9.5 2.5 7.5" stroke="#3558c0" stroke-width="1.3"/><path d="M6.5 0.8 L8.7 2.8 L6 3.6 Z M3.5 9.2 L1.3 7.2 L4 6.4 Z" fill="#3558c0"/></svg>
<svg class="a" style="left:603.7px;top:4.0px" width="10" height="10" viewBox="0 0 10 10" fill="none"><path d="M1.5 8 L3 5 L6 3.5 L7 5.5 L4 8 Z" fill="#4a62d0"/><path d="M6 3.5 L9 1.5" stroke="#d04a2a" stroke-width="1.2"/></svg>
<svg class="a" style="left:615.0px;top:4.0px" width="10" height="10" viewBox="0 0 10 10" fill="none"><path d="M2 2 H6 V6 H2 Z M4 5 H8 V9 H4 Z" stroke="#cfcfcf" stroke-width="0.9" fill="#f1f1f1"/></svg>
<svg class="a" style="left:628.7px;top:4.0px" width="10" height="10" viewBox="0 0 10 10" fill="none"><rect x="1" y="1" width="8" height="8" fill="#eef1fb" stroke="#3a55b0" stroke-width="0.9"/><rect x="1" y="1" width="8" height="1.8" fill="#3a55b0"/><rect x="2.6" y="4" width="1.8" height="4" fill="#d02828"/><rect x="5.6" y="4" width="1.8" height="4" fill="#d02828"/></svg>
<div class="dd" style="left:641.7px;top:8.5px;border-top-color:#222"></div>
<svg class="a" style="left:648.8px;top:4.0px" width="10" height="10" viewBox="0 0 10 10" fill="none"><path d="M1.5 8.5 C1.5 6 2.5 5.5 3 4 C3.5 1.5 6.5 1.5 6.5 4 C8.5 4.5 8.5 6.5 7 7 L8.5 8.5 Z" fill="#7a7a7a"/><path d="M4 5.5 L7 5.5" stroke="#c8c8c8" stroke-width="0.7"/></svg>
<div class="dd" style="left:662px;top:8.5px;border-top-color:#222"></div>
<svg class="a" style="left:670.3px;top:4.0px" width="10" height="10" viewBox="0 0 10 10" fill="none"><path d="M1 3 L5 1.5 L9 3 V7.5 L5 9 L1 7.5 Z" fill="#6a86d8"/><path d="M1 3 L5 1.5 L9 3 L5 4.5 Z" fill="#b8c8f4"/><path d="M5 4.5 L9 3 V7.5 L5 9 Z" fill="#4560b8"/></svg>
<div class="dd" style="left:683.8px;top:8.5px;border-top-color:#222"></div>
<svg class="a" style="left:690.8px;top:4.0px" width="10" height="10" viewBox="0 0 10 10" fill="none"><path d="M1.5 2 V8" stroke="#d02828" stroke-width="1.1"/><path d="M1.5 5 L4 3.2" stroke="#2a9a4a" stroke-width="1"/><path d="M4.5 5 L6.8 2.8 L9 5 L6.8 7.2 Z" stroke="#6878b8" stroke-width="0.9" fill="#e6eaf8"/></svg>
<div class="dd" style="left:704px;top:8.5px;border-top-color:#222"></div>
<div class="vsep" style="left:714px;top:2px;height:14px;background:#e2e2e2"></div>
<div class="dd" style="left:952px;top:11.0px;border-top-color:#222"></div>
</div>
<div id="resbar" class="a">
<svg class="a" style="left:3.0px;top:2.7px" width="8" height="8" viewBox="0 0 8 8" fill="none"><circle cx="4" cy="4" r="2.2" stroke="#444" stroke-width="1"/><path d="M4 0.3 V1.6 M4 6.4 V7.7 M0.3 4 H1.6 M6.4 4 H7.7 M1.4 1.4 L2.3 2.3 M5.7 5.7 L6.6 6.6 M6.6 1.4 L5.7 2.3 M2.3 5.7 L1.4 6.6" stroke="#444" stroke-width="0.9"/></svg>
<svg class="a" style="left:3.0px;top:25.0px" width="12" height="12" viewBox="0 0 12 12" fill="none"><path d="M3 6 V10.5 H8 M3 8 H6" stroke="#3b55c0" stroke-width="1"/><rect x="1" y="1" width="3.2" height="4" fill="#e9bf2c"/><rect x="3.6" y="2.5" width="3" height="3.5" fill="#f4d552"/><rect x="7" y="7" width="3.6" height="3.6" fill="#e9bf2c"/><path d="M7.5 5.5 H11" stroke="#555" stroke-width="0.9"/></svg>
<svg class="a" style="left:3.0px;top:48.0px" width="12" height="12" viewBox="0 0 12 12" fill="none"><path d="M2 1.5 L6 4 L10 1.5 V6.5 L6 4 L2 6.5 Z" fill="#1f3fd0"/><rect x="0.8" y="7" width="5" height="3.8" rx="1" fill="#f0dc3a" stroke="#a89010" stroke-width="0.5"/><path d="M6 7.5 L10.8 10.8 H6 Z" fill="#d02020"/></svg>
<svg class="a" style="left:3.0px;top:68.5px" width="12" height="13" viewBox="0 0 12 13" fill="none"><rect x="1" y="0.8" width="5" height="5" rx="1" fill="#b04ab0"/><rect x="2.3" y="2" width="2.2" height="2.2" fill="#e8b8e8"/><path d="M2.5 6 V10 H6" stroke="#4a5ac0" stroke-width="1"/><circle cx="8.3" cy="10" r="2.2" stroke="#b04ab0" stroke-width="0.9"/><circle cx="8.3" cy="10" r="0.8" fill="#b04ab0"/><path d="M7 4.5 H10.5" stroke="#555" stroke-width="0.9"/></svg>
<svg class="a" style="left:2.5px;top:88.5px" width="13" height="12" viewBox="0 0 13 12" fill="none"><path d="M1 3.5 L3.5 1.5 V10 L1 11 Z" fill="#f08a24"/><path d="M3.5 3 L5 1.8 V10 L3.5 10.8 Z" fill="#f6b26a"/><path d="M5 3.5 L7.5 1.5 V10 L5 11 Z" fill="#3aa84a"/><path d="M7.5 3 L9 1.8 V10 L7.5 10.8 Z" fill="#7fd08a"/><path d="M9 3.5 L12 1 V9.5 L9 11 Z" fill="#2f6fd6"/></svg>
<svg class="a" style="left:2.0px;top:114.5px" width="13" height="13" viewBox="0 0 13 13" fill="none"><circle cx="4.5" cy="8.5" r="3.6" fill="#2a62d8"/><path d="M4.5 6.5 V6.6 M4.5 8 V10.6" stroke="#fff" stroke-width="1.3"/><path d="M4.5 3 C8 3 10 5 10 8.5 M5 0.8 C9.5 0.8 12.2 3.5 12.2 8" stroke="#2a62d8" stroke-width="1.2"/></svg>
<div class="a" style="left:2px;top:137.5px;width:14px;height:22px;background:#fff"></div>
<svg class="a" style="left:4.0px;top:143.5px" width="10" height="12" viewBox="0 0 10 12" fill="none"><path d="M1 0.8 H6.5 L9 3.3 V11.2 H1 Z" fill="#fff" stroke="#4a62c0" stroke-width="0.9"/><circle cx="5" cy="7" r="2.6" fill="#2e9a5a"/><path d="M3.5 6 C4.5 5 6 5.5 6.5 6.8 C5.5 7.5 4.5 8.5 5 9.4" stroke="#bfe8ff" stroke-width="0.9"/></svg>
<svg class="a" style="left:3.5px;top:169.5px" width="11" height="11" viewBox="0 0 11 11" fill="none"><circle cx="5.5" cy="5.5" r="4.6" fill="#f2f4fa" stroke="#6a7690" stroke-width="1"/><path d="M5.5 2.5 V5.5 H8" stroke="#2a3a8a" stroke-width="1"/></svg>
<svg class="a" style="left:3.0px;top:191.0px" width="12" height="12" viewBox="0 0 12 12" fill="none"><rect x="1" y="1" width="4" height="2.5" fill="#e02a2a"/><rect x="1" y="3.5" width="4" height="2.5" fill="#f0d020"/><rect x="1" y="6" width="4" height="2.5" fill="#2ab04a"/><rect x="1" y="8.5" width="4" height="2.5" fill="#2a5ad8"/><path d="M6 3 L10.5 10.5 L8 10.5 L6 6 Z" fill="#222"/></svg>
<svg class="a" style="left:3.0px;top:212.0px" width="12" height="11" viewBox="0 0 12 11" fill="none"><path d="M1 2 L4 3 V10 H1.5 Z" fill="#3a62c8"/><path d="M5 5 L10.5 1.5 L9 5.5 L11 9.5 L5.5 6.8 Z" fill="#5a8ad8"/><path d="M4 3 L6 4.5 L4 8 Z" fill="#1f3a8a"/></svg>
<svg class="a" style="left:3.0px;top:232.5px" width="11" height="12" viewBox="0 0 11 12" fill="none"><path d="M3 3.5 L6.5 1 L8.5 2 L6 4.5 V7" stroke="#777" stroke-width="1.3"/><rect x="2" y="7" width="7" height="2.2" fill="#e9a03a"/><rect x="1" y="9.2" width="8" height="1.8" fill="#888"/><circle cx="6.5" cy="1.8" r="1" fill="#555"/></svg>
</div>
<div id="webpanel" class="a">
<div class="t" style="left:5.5px;top:4.5px;font-size:8.7px;color:#333">Web Browser</div>
<div class="a" style="left:198px;top:5.4px;width:8.2px;height:7.5px;border:1px solid #333;border-top:1.8px solid #222"></div>
<svg class="a" style="left:6.5px;top:21.5px" width="17" height="15" viewBox="0 0 17 15"><defs><linearGradient id="rf" x1="0.2" y1="0" x2="0.8" y2="1"><stop offset="0" stop-color="#ffe100"/><stop offset="1" stop-color="#f08a1e"/></linearGradient><linearGradient id="ba" x1="0" y1="0" x2="0" y2="1"><stop offset="0" stop-color="#9fe6ee"/><stop offset="1" stop-color="#2fa6bf"/></linearGradient></defs><path d="M7.8 14.6 L8.9 10.5 L15.6 8 V12 Z" fill="#e3e8df"/><path d="M1 13 L1 7.6 L3.8 2 L7.6 9.5 L7.8 14.6 Z" fill="#f6f7f3"/><path d="M1 13 L7.8 14.6" stroke="#9aa" stroke-width="0.4"/><rect x="3.7" y="9.4" width="2.5" height="4.6" fill="#2338c4"/><path d="M3.6 1 L10.9 0.7 L16.4 7.8 L8.9 10.9 Z" fill="url(#rf)"/><path d="M3.8 1 L0.4 7.4" stroke="#8a2a22" stroke-width="1.1"/><rect x="2.4" y="0.3" width="1.6" height="2" fill="#a02a22"/></svg>
<svg class="a" style="left:32.5px;top:22.5px" width="13" height="12" viewBox="0 0 13 12"><path d="M0.8 5.8 L6.2 0.8 V3.3 H12.2 V8.3 H6.2 V11 Z" fill="url(#ba)" stroke="#1f7f92" stroke-width="0.9" stroke-linejoin="round"/></svg>
<svg class="a" style="left:57px;top:22.5px" width="13" height="12" viewBox="0 0 13 12"><path d="M12.2 5.8 L6.8 0.8 V3.3 H0.8 V8.3 H6.8 V11 Z" fill="#d9d9d9" stroke="#a6a6a6" stroke-width="0.9" stroke-linejoin="round"/></svg>
<svg class="a" style="left:77.3px;top:21.3px" width="16" height="15" viewBox="0 0 16 15" fill="none"><path d="M10.6 2.4 C8 0.4 3.8 1 2.2 4.4 C0.6 7.8 2.6 12.4 6.6 13 C9.4 13.4 11.6 12 12.6 10" stroke="#2a3aae" stroke-width="1.5"/><path d="M15.4 6.4 L14.6 12 L10 9.2 Z" fill="#2a3aae"/></svg>
<div class="a" style="left:98px;top:22px;width:77.7px;height:13.6px;border:1px solid #d6d6d6;background:#fff;overflow:hidden"><div class="a" style="right:3.5px;top:1px;font-size:8.5px;line-height:10px;color:#333;letter-spacing:-0.15px">com/ct-p/NXforDesign</div></div>
<div class="t" style="left:182px;top:24.5px;font-size:8.1px;color:#333">Tools</div>
<div class="dd" style="left:202.5px;top:31px"></div>
<div class="a" style="left:3.3px;top:41.5px;width:206.5px;height:30px;overflow:hidden;font-family:'Liberation Serif',serif;font-size:11.9px;line-height:14px;color:#000;margin-top:-0.1px;white-space:nowrap"><span id="ad1">AccessDeniedAccess</span><br><span id="ad2" style="letter-spacing:-0.08px">Denied5C34NSH4X87E5B7BJVhri8Udfutt</span></div>
<div class="a" style="left:3px;top:367px;width:208px;height:12px;background:#f0f0f0"></div>
<div class="a" style="left:16px;top:367px;width:57px;height:12px;background:#c9c9c9"></div>
<svg class="a" style="left:7px;top:369.5px" width="5" height="7" viewBox="0 0 5 7" fill="none" stroke="#444" stroke-width="1"><path d="M4 0.8 L1.2 3.5 L4 6.2"/></svg>
<svg class="a" style="left:201px;top:369.5px" width="5" height="7" viewBox="0 0 5 7" fill="none" stroke="#444" stroke-width="1"><path d="M1 0.8 L3.8 3.5 L1 6.2"/></svg>
</div>
<div id="viewtabs" class="a">
<svg class="a" style="left:3px;top:3px" width="9" height="9" viewBox="0 0 9 9" fill="none"><path d="M0.8 7.5 L4 1.5 L5.5 5 L8 2.5" stroke="#5a9a3a" stroke-width="0.9"/><path d="M4 1.5 L6.5 7.5" stroke="#3a4ac0" stroke-width="0.9"/></svg>
<div class="t" style="left:14.2px;top:3px;font-size:9.4px;color:#222">dwg1.prt</div>
<div class="a" style="left:61px;top:0;width:42.5px;height:15px;background:#4a9db4"></div>
<svg class="a" style="left:64px;top:3px" width="9" height="9" viewBox="0 0 9 9"><circle cx="4.5" cy="4.5" r="4" fill="#2a5ad0"/><path d="M3 6.5 L5 2 L6.5 4.5 Z" fill="#fff"/></svg>
<div class="t" style="left:75px;top:3px;font-size:9.4px;color:#fff">1.prt</div>
<svg class="a" style="left:95.5px;top:5px" width="5" height="5" viewBox="0 0 5 5" fill="none" stroke="#fff" stroke-width="1.1"><path d="M0.5 0.5 L4.5 4.5 M4.5 0.5 L0.5 4.5"/></svg>
</div>
<div id="viewport" class="a">
<svg class="a" style="left:0.5px;top:0.4px" width="729" height="366" viewBox="231 130 729 366">
<defs><linearGradient id="ff" gradientUnits="userSpaceOnUse" x1="427.5" y1="255.3" x2="416" y2="286"><stop offset="0" stop-color="#9eb0b5"/><stop offset="1" stop-color="#94a5a9"/></linearGradient><linearGradient id="tf" gradientUnits="userSpaceOnUse" x1="430" y1="255" x2="630" y2="305"><stop offset="0" stop-color="#bccfd6"/><stop offset="1" stop-color="#b0c3cb"/></linearGradient></defs>
<path d="M427.5,255.3 C434,253.8 441,252 447,250.6 C453,249.2 460,248.8 468,249.8 C480,251.6 500,258 530,268 L633.7,307 L612.5,311.3 L508.8,285.8 Z" fill="url(#tf)" stroke="#4d595d" stroke-width="0.7" stroke-linejoin="round"/>
<polygon points="427.5,255.3 508.8,285.8 571.8,372 544.9,456 381.4,395.7" fill="url(#ff)" stroke="#4d595d" stroke-width="0.7" stroke-linejoin="round"/>
<polygon points="612.5,311.3 633.7,307 588.9,447.1 544.9,456 571.8,372" fill="#6f7f84" stroke="#4d595d" stroke-width="0.7" stroke-linejoin="round"/>
<polygon points="508.8,285.8 612.5,311.3 571.8,372" fill="#d7ecf3" stroke="#4d595d" stroke-width="0.7" stroke-linejoin="round"/>
<g fill="none" stroke="#b9635b" stroke-width="0.8" stroke-opacity="0.85">
<polygon points="531.7,430.3 550.6,437.3 544.9,456 526,449.1" fill="rgba(170,200,205,0.35)"/>
<path d="M544.9,456 L558.8,411.4 M544.9,456 L503.4,441.5 M544.9,452 V461 M540.5,456 H549 M553,452.5 L557,456.5 M557,452.5 L553,456.5 M501.8,439 L505,444 M505,439 L501.8,444"/>
<path d="M554.2,426.5 L556.6,419.5 L557.6,426 Z M514.5,446 L508,442 L509.5,445.8 Z" fill="#c4554c"/>
</g>
<path d="M505.3,285.8 H512.3 M508.8,282.3 V289.3" stroke="#2f6fd8" stroke-width="1.1"/>
<path d="M609.0,311.3 H616.0 M612.5,307.8 V314.8" stroke="#2f6fd8" stroke-width="1.1"/>
<path d="M568.3,372 H575.3 M571.8,368.5 V375.5" stroke="#2f6fd8" stroke-width="1.1"/>
<g>
<path d="M251,462 L254,450 L262,449 L267,452.5 L266,463.5 L262,465.5 Z" fill="#d2d3d5"/>
<path d="M251,462 L254,450 L259,452 L262,465.5 Z" fill="#c2c3c6"/>
<path d="M262,464 L244,458.6" stroke="#3aa04a" stroke-width="1.3"/>
<path d="M243,458.2 L248.5,458 L247.5,461 Z" fill="#3aa04a"/>
<path d="M262,464 L267.5,463.5" stroke="#d03030" stroke-width="1.2"/>
<path d="M266,461.5 L269.5,465.5 M269.5,461.5 L266,465.5" stroke="#d04040" stroke-width="0.8"/>
<path d="M261.6,463.5 L265.8,448" stroke="#1f47d8" stroke-width="1.8"/>
<path d="M264.6,452.5 L266.8,445.5 L267.4,452.8 Z" fill="#1f47d8"/>
<text x="265.5" y="447" font-family="Liberation Sans, sans-serif" font-size="6.5" font-weight="bold" fill="#2a5ae0">Z</text>
<text x="238" y="459.5" font-family="Liberation Sans, sans-serif" font-size="6" fill="#3aa04a">Y</text>
</g>
</svg>
</div>
<div id="status" class="a">
<svg class="a" style="left:914px;top:1.8px" width="20" height="9" viewBox="0 0 20 9" fill="none"><rect x="1" y="1" width="6.5" height="6.5" fill="#dcdcdc"/><path d="M1 3 H7.5 M1 5 H7.5 M3.2 1 V7.5 M5.4 1 V7.5" stroke="#c4c4c4" stroke-width="0.5"/><rect x="11.5" y="0.8" width="7" height="7" stroke="#a9b0bc" stroke-width="0.8" stroke-dasharray="2.2 2.4" stroke-dashoffset="1.1"/><rect x="13" y="2.3" width="4" height="4" fill="#4a78d8"/></svg>
</div>
<div id="taskbar" class="a">
<svg class="a" style="left:12.0px;top:9.0px" width="12" height="12" viewBox="0 0 12 12" fill="none"><path d="M0 1.7 L5.2 1 V5.7 H0 Z M5.9 0.9 L12 0 V5.7 H5.9 Z M0 6.3 H5.2 V11 L0 10.3 Z M5.9 6.3 H12 V12 L5.9 11.1 Z" fill="#fff"/></svg>
<div class="a" style="left:36px;top:0;width:257.7px;height:30px;background:#f1f1f1;border:1px solid #d4d4d4;border-bottom:none"></div>
<svg class="a" style="left:46.0px;top:8.5px" width="12" height="12" viewBox="0 0 12 12" fill="none"><circle cx="7.5" cy="4.5" r="3.7" stroke="#222" stroke-width="1"/><path d="M4.9 7.1 L0.7 11.3" stroke="#222" stroke-width="1.1"/></svg>
<div class="a" style="left:66.3px;top:9.4px;font-size:11.1px;line-height:13px;color:#383838">Type here to search</div>
<svg class="a" style="left:304.9px;top:7.8px" width="14" height="14" viewBox="0 0 14 14" fill="none"><circle cx="7" cy="7" r="5.3" stroke="#fff" stroke-width="1.7"/></svg>
<svg class="a" style="left:340.8px;top:8.9px" width="14" height="12" viewBox="0 0 14 12" fill="none"><rect x="2" y="0.6" width="7.6" height="10.8" stroke="#dcdcdc" stroke-width="0.9"/><path d="M0.3 3.2 H11.2 M0.3 8.8 H11.2" stroke="#dcdcdc" stroke-width="0.9"/><path d="M13 0.4 V4.2 M13 5.6 V11.6" stroke="#dcdcdc" stroke-width="1"/></svg>
<svg class="a" style="left:376.6px;top:5.5px" width="20" height="18" viewBox="0 0 20 18" fill="none"><defs><linearGradient id="eg" x1="0" y1="0" x2="0.6" y2="1"><stop offset="0" stop-color="#2fb7ea"/><stop offset="0.55" stop-color="#1b84d6"/><stop offset="1" stop-color="#0c55a0"/></linearGradient><linearGradient id="eg2" x1="0" y1="0" x2="1" y2="0.6"><stop offset="0" stop-color="#2fc0e8"/><stop offset="0.6" stop-color="#4fd27a"/><stop offset="1" stop-color="#6fdc5a"/></linearGradient></defs><path d="M10 0.5 C15.5 0.5 19.5 4.2 19.5 8.8 C19.5 12 17 13.5 14.5 13.5 C12.5 13.5 11.6 12.6 11.8 11.6 C12 10.8 12.6 10.6 12.6 9.4 C12.6 7.6 10.8 6 8.4 6 C4.5 6 1.2 9 0.6 10.2 C0.4 4.5 4.5 0.5 10 0.5 Z" fill="url(#eg2)"/><path d="M0.6 10 C0.6 14.5 4.5 17.6 9 17.6 C11 17.6 12.6 17.2 14 16.4 C10 16.8 6.2 14 6.2 10.6 C6.2 8.6 7.2 7.2 8.4 6.6 C4.5 6.2 0.6 8 0.6 10 Z" fill="url(#eg)"/><path d="M6.2 10.6 C6.2 14 10 17 14.5 16.2 C16.5 15.2 18 13.6 18.8 11.8 C17.5 13 15.5 13.7 13.8 13.4 C12 13.1 11.4 12.2 11.8 11.2 C12.2 10.3 12.6 10 12.5 9 C12.2 7 10 6 8.4 6.6 C7 7.2 6.2 8.8 6.2 10.6 Z" fill="#0e4f9c"/><path d="M0.6 10 C1 6.8 4.4 4.4 8.4 4.6 C11.5 4.8 13.6 6.8 13.4 9.2 C13.3 10.2 12.8 10.8 12.6 11.2 C12.4 9 10.5 6.4 8.4 6.4 C4.5 6.4 0.8 8.6 0.6 10 Z" fill="#1a78cf" opacity="0.9"/></svg>
<svg class="a" style="left:415.8px;top:8.2px" width="17" height="14" viewBox="0 0 17 14" fill="none"><path d="M0.3 1 H5.8 L7.3 2.6 H16.7 V13.6 H0.3 Z" fill="#f3bc3a"/><path d="M0.3 4.2 H16.7 V13.6 H0.3 Z" fill="#fbd768"/><path d="M3.8 8 H13.2 V13.6 H3.8 Z" fill="#3f93ea"/><path d="M5.4 10.4 H11.6 V13.6 H5.4 Z" fill="#fbd768"/></svg>
<svg class="a" style="left:452.3px;top:6.3px" width="18" height="17" viewBox="0 0 18 17" fill="none"><path d="M0.5 5 H17.5 V16.5 H0.5 Z" fill="#f6f6f6"/><path d="M5.6 5 V3.6 C5.6 0.2 12.4 0.2 12.4 3.6 V5" stroke="#f6f6f6" stroke-width="1.2"/><rect x="5.2" y="7" width="3.4" height="3.4" fill="#f25022"/><rect x="9.3" y="7" width="3.4" height="3.4" fill="#7fba00"/><rect x="5.2" y="11.1" width="3.4" height="3.4" fill="#00a4ef"/><rect x="9.3" y="11.1" width="3.4" height="3.4" fill="#ffb900"/></svg>
<svg class="a" style="left:489.9px;top:6.8px" width="18" height="15" viewBox="0 0 18 15" fill="none"><path d="M0.2 5.2 L9 0.2 L17.8 5.2 V14.6 H0.2 Z" fill="#fff"/><path d="M2 6 L15.8 6.6 L9.2 11.4 L11.4 7.8 Z" fill="#1a1a1a"/></svg>
<svg class="a" style="left:529.0px;top:7.5px" width="16" height="13" viewBox="0 0 16 13" fill="none"><rect x="0.5" y="0.6" width="15" height="3.8" rx="0.6" fill="#a040b8"/><rect x="0.5" y="4.6" width="15" height="3.8" rx="0.6" fill="#2a55d8"/><rect x="0.5" y="8.6" width="15" height="3.8" rx="0.6" fill="#2e9e4a"/><path d="M0.5 2.2 H15.5 M0.5 6.2 H15.5 M0.5 10.2 H15.5" stroke="#fff" stroke-opacity="0.35" stroke-width="0.6"/><rect x="6.6" y="0.3" width="2.8" height="12.4" fill="#c9a85a"/><rect x="7.2" y="4" width="1.6" height="3.2" fill="#6a4a14"/></svg>
<div class="a" style="left:556.3px;top:0;width:36.4px;height:30px;background:#404040"></div>
<svg class="a" style="left:564.0px;top:4.8px" width="20" height="19" viewBox="0 0 20 19" fill="none"><defs><radialGradient id="ng" cx="0.4" cy="0.35" r="0.7"><stop offset="0" stop-color="#7fd0ff"/><stop offset="0.5" stop-color="#2a86e0"/><stop offset="1" stop-color="#0b3f9a"/></radialGradient></defs><path d="M3.2 14.8 C0.5 16.8 3 18.6 8 17.2 C13 15.8 18 11.5 18.6 7.6 C19 5 16.5 4.8 14.6 6" stroke="#f0b21c" stroke-width="1.5" fill="none"/><circle cx="10" cy="10.5" r="5.7" fill="url(#ng)"/><path d="M7.5 8.5 C9 7 12 7.5 12.5 9.5 C11 10.5 9 10.5 7.5 8.5Z" fill="#4fc06a" opacity="0.8"/><path d="M3.6 14.6 C6 15.4 11 13.8 14.6 10.4 C16.4 8.6 17.4 6.8 17 5.6" stroke="#f7c62e" stroke-width="1.6" fill="none"/><path d="M5.2 1.4 L11.6 3.2 L7.4 8.2 Z" fill="#d8203a"/><path d="M5.2 1.4 L11.6 3.2 L8.6 4.6 Z" fill="#f0607a"/></svg>
<svg class="a" style="left:603.5px;top:6.3px" width="17" height="17" viewBox="0 0 17 17" fill="none"><circle cx="8.5" cy="8.5" r="8.2" fill="#db4437"/><path d="M8.5 8.5 L1.4 4.4 A8.2 8.2 0 0 0 4.9 15.9 Z" fill="#0f9d58"/><path d="M8.5 8.5 L4.9 15.9 A8.2 8.2 0 0 0 16.6 7 Z" fill="#ffcd40"/><path d="M8.5 8.5 L16.6 7 A8.2 8.2 0 0 0 1.4 4.4 Z" fill="#db4437"/><circle cx="8.5" cy="8.5" r="3.9" fill="#fff"/><circle cx="8.5" cy="8.5" r="3" fill="#4285f4"/></svg>
<div class="a" style="left:409.5px;top:28px;width:30.0px;height:2px;background:#7ab8ea"></div>
<div class="a" style="left:556.3px;top:28px;width:36.4px;height:2px;background:#7ab8ea"></div>
<div class="a" style="left:596px;top:28px;width:31.0px;height:2px;background:#7ab8ea"></div>
<div class="a" style="left:683.4px;top:3px;font-size:8.4px;line-height:9px;color:#fff">EN</div>
<svg class="a" style="left:718.6px;top:6.9px" width="18" height="15" viewBox="0 0 18 15" fill="none"><defs><linearGradient id="sn" x1="0" y1="0" x2="0" y2="1"><stop offset="0" stop-color="#fbd34a"/><stop offset="1" stop-color="#f2a01e"/></linearGradient><linearGradient id="cl" x1="0" y1="0" x2="0" y2="1"><stop offset="0" stop-color="#f4f7fb"/><stop offset="1" stop-color="#c9d6e6"/></linearGradient></defs><circle cx="8.2" cy="5.6" r="5.2" fill="url(#sn)"/><path d="M3.2 14.6 C-0.6 14.6 -0.4 9.2 3.2 9.2 C3.6 6 8.6 5.4 10.2 8.4 C12.6 7 16 8.4 15.6 10.6 C18.6 10.6 18.6 14.6 15.8 14.6 Z" fill="url(#cl)"/></svg>
<div class="a" style="left:742.8px;top:10px;font-size:9.9px;line-height:12px;color:#fff">26°C</div>
<svg class="a" style="left:777.0px;top:12.0px" width="10" height="6" viewBox="0 0 10 6" fill="none"><path d="M0.6 5.4 L5 0.9 L9.4 5.4" stroke="#fff" stroke-width="1"/></svg>
<svg class="a" style="left:795.0px;top:10.5px" width="10" height="10" viewBox="0 0 10 10" fill="none"><rect x="1" y="1.5" width="5.5" height="7" rx="1.5" stroke="#e6e6e6" stroke-width="0.8"/><circle cx="3.7" cy="5" r="1.2" stroke="#e6e6e6" stroke-width="0.7"/><path d="M6.5 4 L9 3 V7 L6.5 6" stroke="#e6e6e6" stroke-width="0.8"/></svg>
<svg class="a" style="left:811.8px;top:11.5px" width="12" height="8" viewBox="0 0 12 8" fill="none"><rect x="2.5" y="2" width="9" height="5" fill="#e9e9e9"/><path d="M0.5 1 L3 1 M1.5 0.3 V3.5 L3 4.5" stroke="#e9e9e9" stroke-width="0.8"/></svg>
<svg class="a" style="left:831.5px;top:10.5px" width="10" height="10" viewBox="0 0 10 10" fill="none"><circle cx="8.3" cy="8.5" r="0.9" fill="#fff"/><path d="M5.3 9 C5.3 7.3 6.5 6 8.6 6" stroke="#cfcfcf" stroke-width="0.9"/><path d="M3 9 C3 5.5 5.2 3.5 8.6 3.5" stroke="#a9a9a9" stroke-width="0.9"/><path d="M0.8 9 C0.8 4 4 1 8.6 1" stroke="#8c8c8c" stroke-width="0.9"/></svg>
<svg class="a" style="left:847.7px;top:11.0px" width="12" height="9" viewBox="0 0 12 9" fill="none"><path d="M0.8 3.3 H2.8 L5.3 1 V8 L2.8 5.8 H0.8 Z" stroke="#fff" stroke-width="0.8"/><path d="M6.8 3 C7.6 4 7.6 5 6.8 6 M8.3 1.8 C9.8 3.5 9.8 5.5 8.3 7.2 M9.9 0.8 C12 3.3 12 5.8 9.9 8.2" stroke="#fff" stroke-width="0.7"/></svg>
<div class="a tc" style="left:861px;width:60px;top:3px;font-size:9px;line-height:11px;color:#fff;-webkit-text-stroke:0.25px #fff">14:37</div>
<div class="a tc" style="left:861px;width:60px;top:17px;font-size:9px;line-height:11px;color:#fff;-webkit-text-stroke:0.25px #fff">18-09-2022</div>
<svg class="a" style="left:928.8px;top:9.3px" width="13" height="12" viewBox="0 0 13 12" fill="none"><path d="M0.8 0.8 H12.2 V8.8 H8 L6.5 10.8 L5 8.8 H0.8 Z" stroke="#fff" stroke-width="0.9"/></svg>
<div class="a" style="left:956px;top:0;width:1px;height:30px;background:#5a5a5a"></div>
</div>
</body>
</html>
